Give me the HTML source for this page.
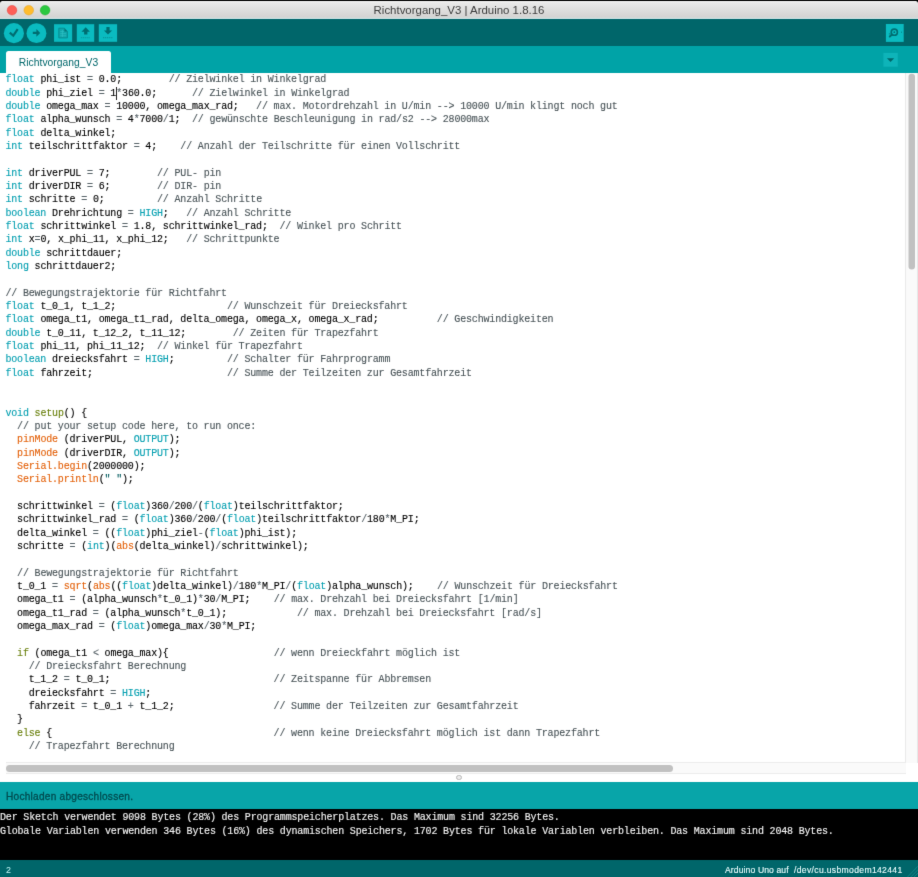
<!DOCTYPE html>
<html lang="de">
<head>
<meta charset="utf-8">
<title>Richtvorgang_V3 | Arduino 1.8.16</title>
<style>
html,body{margin:0;padding:0;}
body{width:918px;height:877px;overflow:hidden;background:#000;position:relative;font-family:"Liberation Sans",sans-serif;}
#win{position:absolute;left:0;top:0;width:918px;height:877px;overflow:hidden;background:#000;}
.abs{position:absolute;}
#title,#tabtext,#statustext,.con,#ln,#board,#board2{will-change:transform;}
#titlebar{left:0;top:1px;width:918px;height:18.4px;background:linear-gradient(#f1f1f1 0,#e8e8e8 14%,#d4d3d2 90%,#cfe0e1 96%,#cbe6e8 100%);border-radius:2.5px 2.5px 0 0;}
#title{left:0;top:-0.5px;width:918px;height:20px;line-height:21px;text-align:center;font-size:11.45px;color:#3c3c3c;}
#toolbar{left:0;top:19.3px;width:918px;height:26.7px;background:#00666a;}
#tabbar{left:0;top:46px;width:918px;height:26.6px;background:#00a3a7;}
#tab{left:6.2px;top:51px;width:104.8px;height:22px;background:#fff;border-radius:2.5px 2.5px 0 0;}
#tabtext{left:5.5px;top:52.3px;width:105px;height:22px;line-height:22px;text-align:center;font-size:10.3px;letter-spacing:0.02px;color:#00676b;}
.btn{position:absolute;background:#0abbc0;}
#editor{left:0;top:72.6px;width:918px;height:709.6px;background:#fff;overflow:hidden;}
.ln{position:absolute;left:5.40px;white-space:pre;font-family:"Liberation Mono",monospace;font-size:10.000px;line-height:13.333px;height:13.333px;letter-spacing:-0.1710px;color:#000;-webkit-text-stroke:0.12px #000;}
.ln span{-webkit-text-stroke:0.12px currentColor;}
.t{color:#059fb0;}
.r{color:#6a800e;}
.f{color:#e3620c;}
.c{color:#4a5559;}
.s{color:#005c5f;}
.o{color:#59646a;}
#vtrack{left:905.2px;top:72.5px;width:12.8px;height:690px;background:#fafafa;border-left:1px solid #e9e9e9;border-right:1px solid #e6e6e6;box-sizing:border-box;}
#htrack{left:5.5px;top:762.3px;width:900px;height:11.5px;background:#fafafa;border-top:1px solid #ececec;border-bottom:1px solid #ececec;box-sizing:border-box;}
#hthumb{left:6px;top:765px;width:666.5px;height:7px;border-radius:3.5px;background:#c1c1c1;}
#dot{left:456.4px;top:775px;width:5.4px;height:5.4px;border-radius:50%;border:1px solid #b8b8b8;box-sizing:border-box;background:#ececec;}
#status{left:0;top:782px;width:918px;height:27px;background:#08a5a9;}
#statustext{left:5.8px;top:783.1px;height:27px;line-height:28px;font-size:10.1px;letter-spacing:0.25px;color:#004b4f;-webkit-text-stroke:0.3px #004b4f;white-space:pre;}
#console{left:0;top:809px;width:918px;height:50.5px;background:#000;}
.con{position:absolute;left:0;white-space:pre;font-family:"Liberation Mono",monospace;font-size:10.000px;line-height:13.333px;letter-spacing:-0.1710px;color:#f0f0f0;-webkit-text-stroke:0.15px #f0f0f0;}
#footer{left:0;top:859.5px;width:918px;height:17.5px;background:#00666a;}
#ln{left:5.6px;top:860.6px;height:17.5px;line-height:19px;font-size:8.9px;color:#c4f6f6;white-space:pre;}
#board,#board2{top:860.8px;height:17.5px;line-height:19px;font-size:8.6px;color:#ecffff;-webkit-text-stroke:0.12px #ecffff;white-space:pre;}
#board{left:724.6px;letter-spacing:0.11px;}
#board2{left:793.5px;letter-spacing:0.33px;}
</style>
</head>
<body>
<svg width="0" height="0" style="position:absolute"><defs><filter id="soft" x="0" y="0" width="100%" height="100%" color-interpolation-filters="sRGB"><feConvolveMatrix order="3" kernelMatrix="0.0081 0.0738 0.0081 0.0738 0.6724 0.0738 0.0081 0.0738 0.0081" edgeMode="duplicate" preserveAlpha="true"/></filter></defs></svg>
<div id="win" style="filter:url(#soft)">
  <div id="titlebar" class="abs"></div>
  <svg class="abs" style="left:0;top:0" width="60" height="20" viewBox="0 0 60 20">
    <circle cx="12" cy="10.2" r="4.8" fill="#fd5f57" stroke="#e2443f" stroke-width="0.5"/>
    <circle cx="28.75" cy="10.2" r="4.8" fill="#febc2e" stroke="#e0a028" stroke-width="0.5"/>
    <circle cx="45.1" cy="10.2" r="4.8" fill="#2bc840" stroke="#1fad2c" stroke-width="0.5"/>
  </svg>
  <div id="title" class="abs">Richtvorgang_V3 | Arduino 1.8.16</div>

  <div id="toolbar" class="abs"></div>
  <!-- toolbar buttons + icons (single overlay svg, absolute coordinates) -->
  <svg class="abs" style="left:0;top:0" width="918" height="80" viewBox="0 0 918 80">
    <g transform="translate(0,19)">
      <circle cx="13.9" cy="14.15" r="10.05" fill="#0abbc0"/>
      <circle cx="36.45" cy="14.15" r="9.95" fill="#0abbc0"/>
      <rect x="54.05" y="5.2" width="18.1" height="17.6" fill="#0abbc0"/>
      <rect x="76.8" y="5.2" width="17.4" height="17.6" fill="#0abbc0"/>
      <rect x="98.8" y="5.2" width="18.3" height="17.6" fill="#0abbc0"/>
      <rect x="885.9" y="5" width="17.8" height="17.9" fill="#0abbc0"/>

    <!-- verify: check mark -->
    <path d="M9.8 13.6 L13.3 16.7 L17.7 10.1" fill="none" stroke="#006d71" stroke-width="2.2"/>
    <!-- upload: right arrow -->
    <path d="M32.8 12.7 H36.4 V10.1 L40.2 13.9 L36.4 17.7 V15.1 H32.8 Z" fill="#006d71"/>
    <!-- new: document -->
    <path d="M58.8 9.2 H64.4 L67.4 12.4 V18.9 H58.8 Z" fill="#10a6ab" stroke="#078a8f" stroke-width="0.9"/>
    <path d="M64.4 9.2 V12.4 H67.4 Z" fill="#04767b"/>
    <path d="M60.2 12.6 H64 M60.2 14.7 H66.2 M60.2 16.8 H66.2 M62.4 11 V18" stroke="#2fc0c4" stroke-width="0.7" fill="none"/>
    <!-- open: up arrow -->
    <path d="M85.7 8.2 L89.9 12.7 H87.4 V15.6 H84.1 V12.7 H81.5 Z" fill="#006d71"/>
    <path d="M80.9 18.7 H90.4" stroke="#0a9499" stroke-width="0.9" stroke-dasharray="1.2 0.7"/>
    <!-- save: down arrow -->
    <path d="M108 15.6 L112.1 11.5 H109.6 V8 H106.4 V11.5 H103.9 Z" fill="#006d71"/>
    <path d="M103 18.7 H112.9" stroke="#0a8f94" stroke-width="1" stroke-dasharray="1.2 0.7"/>
    <!-- serial monitor: magnifier -->
    <circle cx="894.3" cy="13.2" r="3.1" fill="none" stroke="#006d71" stroke-width="1.6"/>
    <circle cx="894.3" cy="13.2" r="0.9" fill="#006d71"/>
    <path d="M892 15.6 L889.8 17.5" stroke="#006d71" stroke-width="2" stroke-linecap="round"/>
    <path d="M888.9 14.9 H890.3" stroke="#006d71" stroke-width="0.8"/>
    <path d="M901 13.2 H902" stroke="#006d71" stroke-width="0.8"/>
    </g>
  </svg>

  <div id="tabbar" class="abs"></div>
  <div id="tab" class="abs"></div>
  <div id="tabtext" class="abs">Richtvorgang_V3</div>
  <svg class="abs" style="left:0;top:0" width="918" height="80" viewBox="0 0 918 80">
    <rect x="883.4" y="52.9" width="14.4" height="13.8" fill="#0eb4b9"/>
    <path d="M886.9 58.2 H894.2 L890.55 61.9 Z" fill="#00666a"/>
  </svg>

  <div id="editor" class="abs"></div>
  <div id="code" style="position:absolute;left:0;top:0;width:918px;height:877px;will-change:transform;">
<div class="ln" style="top:73.30px"><span class="t">float</span> phi_ist <span class="o">=</span> 0.0;        <span class="c">// Zielwinkel in Winkelgrad</span></div>
<div class="ln" style="top:86.63px"><span class="t">double</span> phi_ziel <span class="o">=</span> 1<span class="o">*</span>360.0;      <span class="c">// Zielwinkel in Winkelgrad</span></div>
<div class="ln" style="top:99.97px"><span class="t">double</span> omega_max <span class="o">=</span> 10000, omega_max_rad;   <span class="c">// max. Motordrehzahl in U/min --&gt; 10000 U/min klingt noch gut</span></div>
<div class="ln" style="top:113.30px"><span class="t">float</span> alpha_wunsch <span class="o">=</span> 4<span class="o">*</span>7000<span class="o">/</span>1;  <span class="c">// gewünschte Beschleunigung in rad/s2 --&gt; 28000max</span></div>
<div class="ln" style="top:126.63px"><span class="t">float</span> delta_winkel;</div>
<div class="ln" style="top:139.97px"><span class="t">int</span> teilschrittfaktor <span class="o">=</span> 4;    <span class="c">// Anzahl der Teilschritte für einen Vollschritt</span></div>
<div class="ln" style="top:166.63px"><span class="t">int</span> driverPUL <span class="o">=</span> 7;        <span class="c">// PUL- pin</span></div>
<div class="ln" style="top:179.96px"><span class="t">int</span> driverDIR <span class="o">=</span> 6;        <span class="c">// DIR- pin</span></div>
<div class="ln" style="top:193.30px"><span class="t">int</span> schritte <span class="o">=</span> 0;         <span class="c">// Anzahl Schritte</span></div>
<div class="ln" style="top:206.63px"><span class="t">boolean</span> Drehrichtung <span class="o">=</span> <span class="t">HIGH</span>;   <span class="c">// Anzahl Schritte</span></div>
<div class="ln" style="top:219.96px"><span class="t">float</span> schrittwinkel <span class="o">=</span> 1.8, schrittwinkel_rad;  <span class="c">// Winkel pro Schritt</span></div>
<div class="ln" style="top:233.30px"><span class="t">int</span> x<span class="o">=</span>0, x_phi_11, x_phi_12;   <span class="c">// Schrittpunkte</span></div>
<div class="ln" style="top:246.63px"><span class="t">double</span> schrittdauer;</div>
<div class="ln" style="top:259.96px"><span class="t">long</span> schrittdauer2;</div>
<div class="ln" style="top:286.63px"><span class="c">// Bewegungstrajektorie für Richtfahrt</span></div>
<div class="ln" style="top:299.96px"><span class="t">float</span> t_0_1, t_1_2;                   <span class="c">// Wunschzeit für Dreiecksfahrt</span></div>
<div class="ln" style="top:313.29px"><span class="t">float</span> omega_t1, omega_t1_rad, delta_omega, omega_x, omega_x_rad;          <span class="c">// Geschwindigkeiten</span></div>
<div class="ln" style="top:326.63px"><span class="t">double</span> t_0_11, t_12_2, t_11_12;        <span class="c">// Zeiten für Trapezfahrt</span></div>
<div class="ln" style="top:339.96px"><span class="t">float</span> phi_11, phi_11_12;  <span class="c">// Winkel für Trapezfahrt</span></div>
<div class="ln" style="top:353.29px"><span class="t">boolean</span> dreiecksfahrt <span class="o">=</span> <span class="t">HIGH</span>;         <span class="c">// Schalter für Fahrprogramm</span></div>
<div class="ln" style="top:366.63px"><span class="t">float</span> fahrzeit;                       <span class="c">// Summe der Teilzeiten zur Gesamtfahrzeit</span></div>
<div class="ln" style="top:406.62px"><span class="t">void</span> <span class="r">setup</span>() {</div>
<div class="ln" style="top:419.96px">  <span class="c">// put your setup code here, to run once:</span></div>
<div class="ln" style="top:433.29px">  <span class="f">pinMode</span> (driverPUL, <span class="t">OUTPUT</span>);</div>
<div class="ln" style="top:446.62px">  <span class="f">pinMode</span> (driverDIR, <span class="t">OUTPUT</span>);</div>
<div class="ln" style="top:459.96px">  <span class="f">Serial.begin</span>(2000000);</div>
<div class="ln" style="top:473.29px">  <span class="f">Serial.println</span>(<span class="s">" "</span>);</div>
<div class="ln" style="top:499.96px">  schrittwinkel <span class="o">=</span> (<span class="t">float</span>)360<span class="o">/</span>200<span class="o">/</span>(<span class="t">float</span>)teilschrittfaktor;</div>
<div class="ln" style="top:513.29px">  schrittwinkel_rad <span class="o">=</span> (<span class="t">float</span>)360<span class="o">/</span>200<span class="o">/</span>(<span class="t">float</span>)teilschrittfaktor<span class="o">/</span>180<span class="o">*</span>M_PI;</div>
<div class="ln" style="top:526.62px">  delta_winkel <span class="o">=</span> ((<span class="t">float</span>)phi_ziel<span class="o">-</span>(<span class="t">float</span>)phi_ist);</div>
<div class="ln" style="top:539.96px">  schritte <span class="o">=</span> (<span class="t">int</span>)(<span class="f">abs</span>(delta_winkel)<span class="o">/</span>schrittwinkel);</div>
<div class="ln" style="top:566.62px">  <span class="c">// Bewegungstrajektorie für Richtfahrt</span></div>
<div class="ln" style="top:579.95px">  t_0_1 <span class="o">=</span> <span class="f">sqrt</span>(<span class="f">abs</span>((<span class="t">float</span>)delta_winkel)<span class="o">/</span>180<span class="o">*</span>M_PI<span class="o">/</span>(<span class="t">float</span>)alpha_wunsch);    <span class="c">// Wunschzeit für Dreiecksfahrt</span></div>
<div class="ln" style="top:593.29px">  omega_t1 <span class="o">=</span> (alpha_wunsch<span class="o">*</span>t_0_1)<span class="o">*</span>30<span class="o">/</span>M_PI;    <span class="c">// max. Drehzahl bei Dreiecksfahrt [1/min]</span></div>
<div class="ln" style="top:606.62px">  omega_t1_rad <span class="o">=</span> (alpha_wunsch<span class="o">*</span>t_0_1);            <span class="c">// max. Drehzahl bei Dreiecksfahrt [rad/s]</span></div>
<div class="ln" style="top:619.95px">  omega_max_rad <span class="o">=</span> (<span class="t">float</span>)omega_max<span class="o">/</span>30<span class="o">*</span>M_PI;</div>
<div class="ln" style="top:646.62px">  <span class="r">if</span> (omega_t1 <span class="o">&lt;</span> omega_max){                  <span class="c">// wenn Dreieckfahrt möglich ist</span></div>
<div class="ln" style="top:659.95px">    <span class="c">// Dreiecksfahrt Berechnung</span></div>
<div class="ln" style="top:673.28px">    t_1_2 <span class="o">=</span> t_0_1;                            <span class="c">// Zeitspanne für Abbremsen</span></div>
<div class="ln" style="top:686.62px">    dreiecksfahrt <span class="o">=</span> <span class="t">HIGH</span>;</div>
<div class="ln" style="top:699.95px">    fahrzeit <span class="o">=</span> t_0_1 <span class="o">+</span> t_1_2;                 <span class="c">// Summe der Teilzeiten zur Gesamtfahrzeit</span></div>
<div class="ln" style="top:713.28px">  }</div>
<div class="ln" style="top:726.62px">  <span class="r">else</span> {                                      <span class="c">// wenn keine Dreiecksfahrt möglich ist dann Trapezfahrt</span></div>
<div class="ln" style="top:739.95px">    <span class="c">// Trapezfahrt Berechnung</span></div>
  </div>
  <div class="abs" style="left:116.1px;top:87.4px;width:1px;height:12.2px;background:#222;"></div>
  <div id="vtrack" class="abs"></div>
  <svg class="abs" style="left:900px;top:70px" width="18" height="210" viewBox="900 70 18 210"><rect x="908.5" y="73.8" width="6.5" height="195.6" rx="3.25" fill="#c1c1c1"/></svg>
  <div id="htrack" class="abs"></div>
  <div id="hthumb" class="abs"></div>
  <div id="dot" class="abs"></div>

  <div id="status" class="abs"></div>
  <div id="statustext" class="abs">Hochladen abgeschlossen.</div>
  <div id="console" class="abs"></div>
  <div class="con" style="top:811px">Der Sketch verwendet 9098 Bytes (28%) des Programmspeicherplatzes. Das Maximum sind 32256 Bytes.</div>
  <div class="con" style="top:824.7px">Globale Variablen verwenden 346 Bytes (16%) des dynamischen Speichers, 1702 Bytes für lokale Variablen verbleiben. Das Maximum sind 2048 Bytes.</div>
  <div id="footer" class="abs"></div>
  <svg class="abs" style="left:904px;top:863px" width="14" height="14" viewBox="0 0 14 14"><path d="M3.5 14 L14 3.2 M6.8 14 L14 6.6 M10.1 14 L14 10" stroke="#11898d" stroke-width="0.9" fill="none"/></svg>
  <div id="ln" class="abs">2</div>
  <div id="board" class="abs">Arduino Uno auf</div>
  <div id="board2" class="abs">/dev/cu.usbmodem142441</div>
</div>
</body>
</html>
